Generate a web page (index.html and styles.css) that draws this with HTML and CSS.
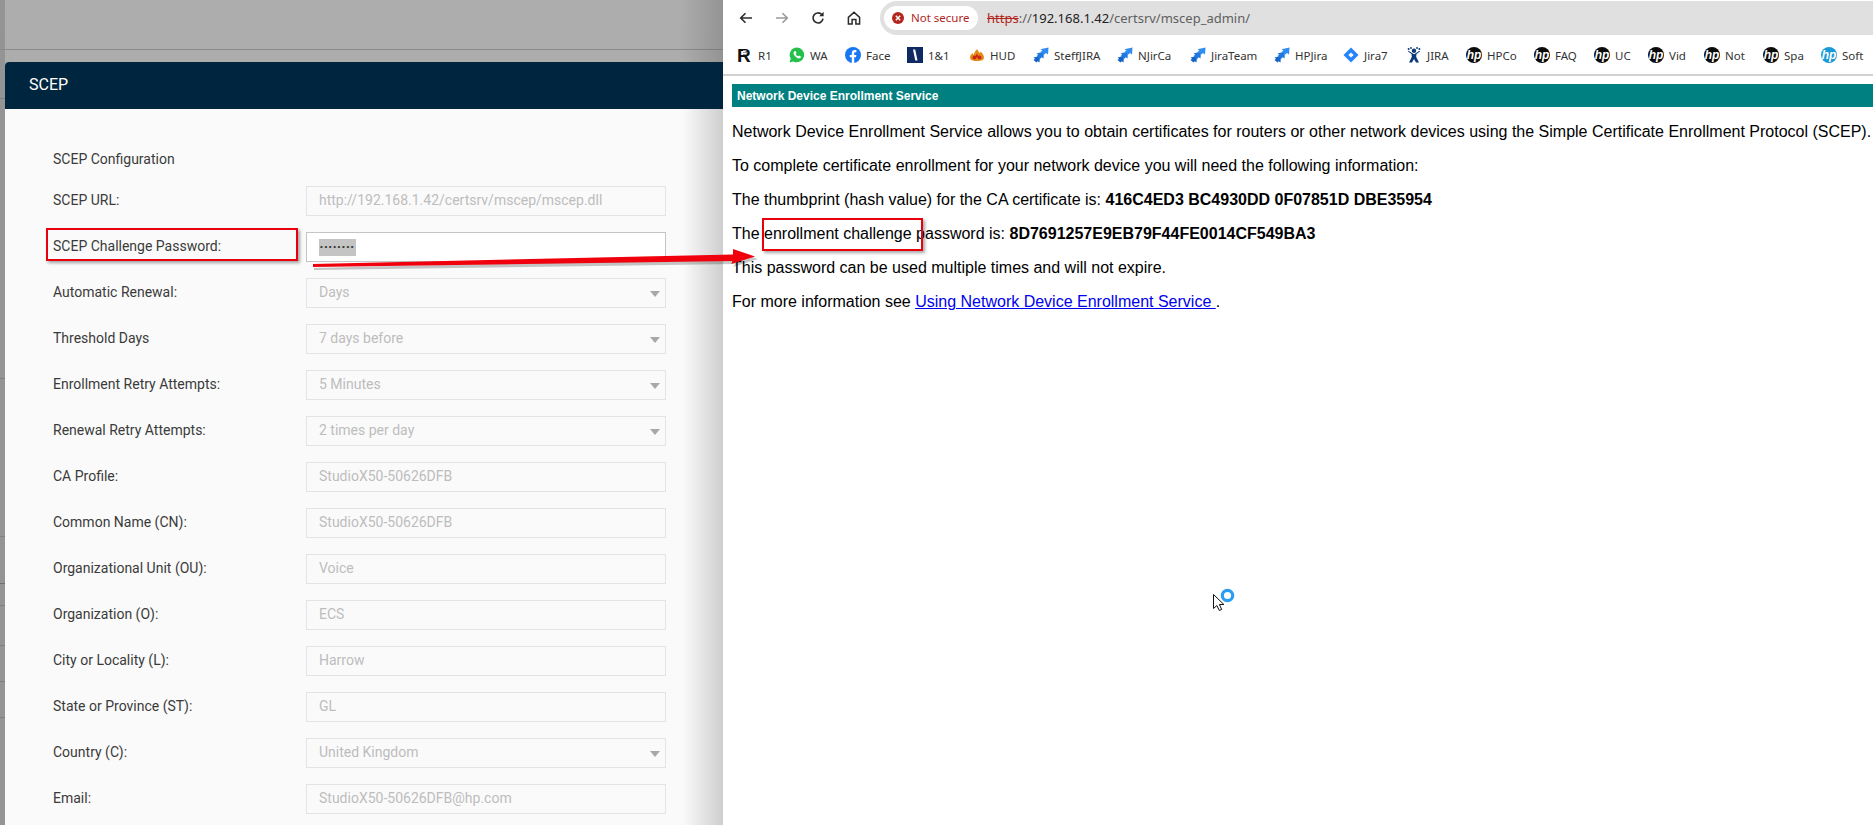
FILE: index.html
```html
<!DOCTYPE html>
<html lang="en">
<head>
<meta charset="utf-8">
<title>SCEP</title>
<link rel="stylesheet" href="styles.css">
</head>
<body>
<svg class="defs" aria-hidden="true">
  <symbol id="i-hp" viewBox="0 0 16 16"><circle cx="8" cy="8" r="8" fill="#0b0b0b"/><text x="8" y="11.800" text-anchor="middle" font-family="Liberation Sans, sans-serif" font-size="12" font-style="italic" font-weight="700" fill="#fff">hp</text></symbol>
  <symbol id="i-hpb" viewBox="0 0 16 16"><circle cx="8" cy="8" r="8" fill="#1a9ad6"/><text x="8" y="11.800" text-anchor="middle" font-family="Liberation Sans, sans-serif" font-size="12" font-style="italic" font-weight="700" fill="#fff">hp</text></symbol>
  <symbol id="i-jira" viewBox="0 0 16 16">
    <path d="M.5 10.500 7 9 6.500 15.500 4.800 14.200 3.500 15.500.5 13 2 11.800z" fill="#1565c8"/>
    <path d="M3.500 6.500 11 4.500 10.500 11.500 8.700 10.200 7 12 3.500 9 5.300 7.800z" fill="#1f78e0"/>
    <path d="M7.500 2.200 15.500.5 15 7.500 13 6 11.500 7.500 7.500 4.800 9.500 3.700z" fill="#2f8cf0"/>
  </symbol>
</svg>

<div class="screen">
  <section class="backdrop">
    <div class="modal">
      <header class="modal-head">SCEP</header>
      <div class="modal-body">
        <h2 class="form-title">SCEP Configuration</h2>
        <div class="form-row"><span class="lbl">SCEP URL:</span><span class="field">http://192.168.1.42/certsrv/mscep/mscep.dll</span></div>
        <div class="form-row"><span class="lbl">SCEP Challenge Password:</span><span class="field active"><span class="dots">••••••••</span></span></div>
        <div class="form-row"><span class="lbl">Automatic Renewal:</span><span class="field select">Days</span></div>
        <div class="form-row"><span class="lbl">Threshold Days</span><span class="field select">7 days before</span></div>
        <div class="form-row"><span class="lbl">Enrollment Retry Attempts:</span><span class="field select">5 Minutes</span></div>
        <div class="form-row"><span class="lbl">Renewal Retry Attempts:</span><span class="field select">2 times per day</span></div>
        <div class="form-row"><span class="lbl">CA Profile:</span><span class="field">StudioX50-50626DFB</span></div>
        <div class="form-row"><span class="lbl">Common Name (CN):</span><span class="field">StudioX50-50626DFB</span></div>
        <div class="form-row"><span class="lbl">Organizational Unit (OU):</span><span class="field">Voice</span></div>
        <div class="form-row"><span class="lbl">Organization (O):</span><span class="field">ECS</span></div>
        <div class="form-row"><span class="lbl">City or Locality (L):</span><span class="field">Harrow</span></div>
        <div class="form-row"><span class="lbl">State or Province (ST):</span><span class="field">GL</span></div>
        <div class="form-row"><span class="lbl">Country (C):</span><span class="field select">United Kingdom</span></div>
        <div class="form-row"><span class="lbl">Email:</span><span class="field">StudioX50-50626DFB@hp.com</span></div>
      </div>
    </div>
  </section>

  <section class="browser">
    <div class="toolbar">
      <svg class="tb-icon" viewBox="0 0 16 16"><path d="M14 8H3M7.500 3.200 2.700 8l4.800 4.800" fill="none" stroke="#2b2b2b" stroke-width="1.600"/></svg>
      <svg class="tb-icon" viewBox="0 0 16 16"><path d="M2 8h11M8.500 3.200 13.300 8l-4.800 4.800" fill="none" stroke="#9a9a9a" stroke-width="1.600"/></svg>
      <svg class="tb-icon" viewBox="0 0 16 16"><path d="M13 8.600A5 5 0 1 1 11.600 4.400" fill="none" stroke="#2b2b2b" stroke-width="1.600"/><path d="M13.600 1.800v4.400H9.200z" fill="#2b2b2b"/></svg>
      <svg class="tb-icon" viewBox="0 0 16 16"><path d="M2.400 7.400 8 2.200l5.600 5.200V14h-3.700V9.400H6.100V14H2.400z" fill="none" stroke="#2b2b2b" stroke-width="1.500"/></svg>
      <div class="omnibox">
        <span class="chip"><svg class="chip-icon" viewBox="0 0 12 12"><circle cx="6" cy="6" r="6" fill="#b3261e"/><path d="M3.800 3.800l4.400 4.400M8.200 3.800 3.800 8.200" stroke="#fff" stroke-width="1.400"/></svg>Not secure</span>
        <span class="url"><s class="scheme">https</s><span class="dim">://</span>192.168.1.42<span class="dim">/certsrv/mscep_admin/</span></span>
      </div>
    </div>

    <nav class="bookmarks">
      <a class="bm w-r1"><svg class="bm-icon r-icon" viewBox="0 0 16 16"><text x="0" y="15" font-family="Liberation Sans, sans-serif" font-size="19" font-weight="700" fill="#111">R</text><path d="M6 3.500h3.500M6 5.500h4.500M6 7.500h3.500" stroke="#999" stroke-width="1"/></svg>R1</a>
      <a class="bm w-wa"><svg class="bm-icon" viewBox="0 0 16 16"><path d="M8 .6a7.300 7.300 0 0 0-6.300 11L.6 15.400l3.900-1A7.300 7.300 0 1 0 8 .6z" fill="#25c04c"/><path d="M5.500 4.200c-.8.600-1.200 1.600-.8 2.800.6 1.800 2.400 3.600 4.200 4.300 1.200.4 2.300 0 2.900-.9l.1-1-1.900-1-.9.900c-1-.4-2-1.400-2.400-2.400l.8-.9-.9-1.900z" fill="#fff"/></svg>WA</a>
      <a class="bm w-fb"><svg class="bm-icon" viewBox="0 0 16 16"><circle cx="8" cy="8" r="8" fill="#1877f2"/><path d="M11 10.300l.4-2.300H9.200V6.500c0-.7.300-1.200 1.200-1.200h1V3.300s-.9-.2-1.800-.2C7.800 3.100 6.800 4.200 6.800 6.200V8H4.800v2.300h2V16h2.400v-5.700z" fill="#fff"/></svg>Face</a>
      <a class="bm w-11"><svg class="bm-icon" viewBox="0 0 16 16"><rect width="16" height="16" fill="#0f2a63"/><path d="M6 2.500h2.200L10.500 13.500H8.300z" fill="#fff"/></svg>1&amp;1</a>
      <a class="bm w-hud"><svg class="bm-icon" viewBox="0 0 16 16"><path d="M8 2c1 2 2 2.500 2.300 4 1-.3 1.400-1 1.500-1.500C13.500 6.500 15 8.500 15 10.500 15 13 12.500 14 8 14s-7-1-7-3.500c0-2 1.400-3 2.600-4.500.3 1 .7 1.500 1.400 1.800C5 5.500 6.500 4 8 2z" fill="#e88a12"/><circle cx="5.500" cy="10.500" r="2" fill="#c8281c"/><circle cx="10.500" cy="10.500" r="2" fill="#c8281c"/><path d="M8 6.500 9.500 9 8 11 6.500 9z" fill="#c8281c"/></svg>HUD</a>
      <a class="bm w-sj"><svg class="bm-icon"><use href="#i-jira"/></svg>SteffJIRA</a>
      <a class="bm w-nj"><svg class="bm-icon"><use href="#i-jira"/></svg>NJirCa</a>
      <a class="bm w-jt"><svg class="bm-icon"><use href="#i-jira"/></svg>JiraTeam</a>
      <a class="bm w-hj"><svg class="bm-icon"><use href="#i-jira"/></svg>HPJira</a>
      <a class="bm w-j7"><svg class="bm-icon" viewBox="0 0 16 16"><path d="M8 .5 15.500 8 8 15.500.5 8z" fill="#2684ff"/><path d="M8 5.400 10.600 8 8 10.600 5.400 8z" fill="#fff"/></svg>Jira7</a>
      <a class="bm w-ji"><svg class="bm-icon" viewBox="0 0 16 16"><circle cx="8" cy="3.800" r="2.200" fill="#0a3a78"/><circle cx="2.600" cy="2" r="1" fill="#0a3a78"/><circle cx="5" cy="1" r=".9" fill="#0a3a78"/><circle cx="11" cy="1" r=".9" fill="#0a3a78"/><circle cx="13.400" cy="2" r="1" fill="#0a3a78"/><path d="M2 4.500 5.500 7 5.800 10 3 15.500h3L8 12l2 3.500h3L10.200 10l.3-3L14 4.500l-.5-.7L8.500 7h-1L2.500 3.800z" fill="#0a3a78"/></svg>JIRA</a>
      <a class="bm w-co"><svg class="bm-icon"><use href="#i-hp"/></svg>HPCo</a>
      <a class="bm w-fq"><svg class="bm-icon"><use href="#i-hp"/></svg>FAQ</a>
      <a class="bm w-uc"><svg class="bm-icon"><use href="#i-hp"/></svg>UC</a>
      <a class="bm w-vd"><svg class="bm-icon"><use href="#i-hp"/></svg>Vid</a>
      <a class="bm w-nt"><svg class="bm-icon"><use href="#i-hp"/></svg>Not</a>
      <a class="bm w-sp"><svg class="bm-icon"><use href="#i-hp"/></svg>Spa</a>
      <a class="bm w-sf"><svg class="bm-icon"><use href="#i-hpb"/></svg>Soft</a>
    </nav>

    <main class="content">
      <h1 class="ndes-title">Network Device Enrollment Service</h1>
      <p>Network Device Enrollment Service allows you to obtain certificates for routers or other network devices using the Simple Certificate Enrollment Protocol (SCEP).</p>
      <p>To complete certificate enrollment for your network device you will need the following information:</p>
      <p>The thumbprint (hash value) for the CA certificate is: <b>416C4ED3 BC4930DD 0F07851D DBE35954</b></p>
      <p>The enrollment challenge password is: <b>8D7691257E9EB79F44FE0014CF549BA3</b></p>
      <p>This password can be used multiple times and will not expire.</p>
      <p>For more information see <a class="link" href="#">Using Network Device Enrollment Service </a>.</p>
    </main>
  </section>

  <div class="mark mark-label"></div>
  <div class="mark mark-text"></div>
  <svg class="arrow" viewBox="0 0 460 24" aria-hidden="true">
    <path class="arrow-shadow" d="M4 24 425 18 423 21 448 13 426 5 426 12 4 22z"/>
    <path class="arrow-fill" d="M3 21 423 15 421 18 445 10.500 423 3 423 8.500 3 18z"/>
  </svg>
  <svg class="cursor" viewBox="0 0 26 26" aria-hidden="true">
    <circle cx="15.500" cy="7.500" r="5.200" fill="none" stroke="#2a9df4" stroke-width="3.200"/>
    <path d="M1.500 6.500v14l3.400-3 2.400 5 2.400-1.100-2.300-4.900h4.500z" fill="#fff" stroke="#111" stroke-width="1"/>
  </svg>
</div>
</body>
</html>
```
FILE: styles.css
```css
* { box-sizing: border-box; }
html, body { margin: 0; padding: 0; width: 1873px; height: 825px; overflow: hidden; background: #fff; }
.defs { display: none; }

.screen { position: relative; display: flex; width: 1873px; height: 825px; overflow: hidden; }

/* Dimmed application behind the dialog */
.backdrop {
  width: 723px; flex: none; padding: 62px 0 0 5px;
  background:
    linear-gradient(90deg, rgba(90,90,90,0) 680px, rgba(90,90,90,.3) 723px),
    linear-gradient(#8a8a8a, #8a8a8a) 0 49px / 100% 1px no-repeat,
    linear-gradient(#808080, #808080) 0 98px / 5px 1px no-repeat,
    linear-gradient(#808080, #808080) 0 378px / 5px 1px no-repeat,
    linear-gradient(#808080, #808080) 0 536px / 5px 1px no-repeat,
    linear-gradient(#707070, #707070) 0 583px / 5px 1px no-repeat,
    linear-gradient(#808080, #808080) 0 605px / 5px 1px no-repeat,
    linear-gradient(#808080, #808080) 0 645px / 5px 1px no-repeat,
    linear-gradient(#808080, #808080) 0 681px / 5px 1px no-repeat,
    linear-gradient(#808080, #808080) 0 717px / 5px 1px no-repeat,
    linear-gradient(90deg, #949494 0 5px, transparent 5px),
    linear-gradient(#adadad, #a5a5a5);
}
.modal { height: 763px; border-radius: 4px 0 0 0; overflow: hidden; background: #fafafa; position: relative; }
.modal::after {
  content: ""; position: absolute; top: 47px; right: 0; bottom: 0; width: 40px;
  background: linear-gradient(90deg, rgba(120,120,120,0), rgba(120,120,120,.34));
}
.modal-head {
  height: 47px; padding: 0 0 2px 24px; display: flex; align-items: center;
  background: #00263f; color: #fff;
  font: 400 16px Roboto, sans-serif;
}
.modal-body { padding: 35px 0 0 48px; font: 400 14px Roboto, sans-serif; color: #3a3a3a; }
.form-title { margin: 0 0 12px; height: 30px; display: flex; align-items: center; font: inherit; color: #3a3a3a; }
.form-row { display: flex; align-items: center; height: 30px; margin-bottom: 16px; }
.lbl { width: 253px; flex: none; padding-bottom: 2px; }
.field {
  width: 360px; height: 30px; display: flex; align-items: center; padding: 0 0 2px 12px;
  border: 1px solid #e4e4e4; color: #bdbdbd; position: relative; background: #fafafa;
}
.field.active { background: #fff; border-color: #c4c4c4; padding-bottom: 0; }
.dots { display: inline-block; width: 37px; height: 17px; line-height: 16px; padding-left: 1px; background: #c4c4c4; color: #333; font-size: 8px; letter-spacing: 1.6px; font-family: "Liberation Sans", sans-serif; white-space: nowrap; overflow: hidden; }
.select::after {
  content: ""; position: absolute; right: 5px; top: 12px;
  border: 5px solid transparent; border-top: 6px solid #a8a8a8; border-bottom: 0;
}

/* Browser window */
.browser { flex: 1; min-width: 0; background: #fff; display: flex; flex-direction: column; position: relative; }
.toolbar { height: 37px; display: flex; align-items: center; padding: 0 0 2px 15px; gap: 20px; }
.tb-icon { width: 16px; height: 16px; flex: none; }
.omnibox {
  flex: 1; height: 34px; margin-left: -2px; border-radius: 17px 0 0 17px; background: #e0e0e0;
  display: flex; align-items: center; padding-left: 4px; gap: 9px;
  font: 400 13px "Noto Sans", sans-serif; color: #222;
}
.chip {
  height: 24px; width: 94px; border-radius: 12px; background: #fff; color: #b3261e;
  display: flex; align-items: center; gap: 7px; padding-left: 8px;
  font: 400 11.5px "Noto Sans", sans-serif; white-space: nowrap;
}
.chip-icon { width: 12px; height: 12px; flex: none; }
.scheme { color: #b3261e; }
.dim { color: #5f5f5f; }
.url { white-space: nowrap; }

.bookmarks {
  height: 39px; padding: 0 0 1px 14px; display: flex; align-items: center; border-bottom: 2px solid #d2d2d2;
  font: 400 11.5px "Noto Sans", sans-serif; color: #333; white-space: nowrap; overflow: hidden;
}
.bm { display: flex; align-items: center; gap: 5px; flex: none; }
.bm-icon { width: 16px; height: 16px; flex: none; }
.r-icon { overflow: visible; }
.w-r1 { width: 52px; } .w-wa { width: 56px; } .w-fb { width: 62px; } .w-11 { width: 62px; }
.w-hud { width: 64px; } .w-sj { width: 84px; } .w-nj { width: 73px; } .w-jt { width: 84px; }
.w-hj { width: 69px; } .w-j7 { width: 63px; } .w-ji { width: 60px; } .w-co { width: 68px; }
.w-fq { width: 60px; } .w-uc { width: 54px; } .w-vd { width: 56px; } .w-nt { width: 59px; }
.w-sp { width: 58px; } .w-sf { width: 50px; }

.content { padding: 8px 0 0 9px; font: 400 16px/18px "Liberation Sans", Arial, sans-serif; color: #000; white-space: nowrap; }
.ndes-title {
  margin: 0 0 16px; height: 23px; padding-left: 5px; display: flex; align-items: center;
  background: #008080; color: #fff; font: 700 12px "Liberation Sans", Arial, sans-serif;
}
.content p { margin: 0 0 16px; }
.link { color: #0000ee; text-decoration: underline; }

/* Annotations laid over the screenshot */
.mark { position: absolute; border: 2px solid #e8000d; box-shadow: 2px 2px 3px rgba(0,0,0,.35); }
.mark-label { left: 46px; top: 228px; width: 252px; height: 33px; }
.mark-text { left: 762px; top: 218px; width: 161px; height: 33px; }
.arrow { position: absolute; left: 310px; top: 246px; width: 460px; height: 24px; overflow: visible; }
.arrow-shadow { fill: rgba(0,0,0,.22); }
.arrow-fill { fill: #f0000c; }
.cursor { position: absolute; left: 1212px; top: 588px; width: 26px; height: 26px; }
```
